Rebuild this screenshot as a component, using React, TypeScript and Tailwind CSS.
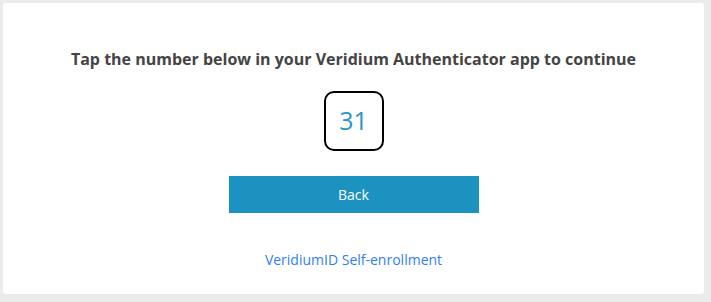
export default function App() {
  return (
    <div className="w-[711px] h-[302px] bg-[#ebebeb] pt-[3px] pl-[3px]" style={{ fontFamily: '"Open Sans", sans-serif' }}>
      <div className="w-[701px] h-[291px] bg-white rounded-[3px] flex flex-col items-center">
        <h1 className="mt-[45px] text-[16px] leading-[22px] font-bold text-[#444444]">
          Tap the number below in your Veridium Authenticator app to continue
        </h1>
        <div className="mt-[21px] w-[60px] h-[60px] border-2 border-black rounded-[10px] flex items-center justify-center text-[25px] text-[#2a95c8]">
          31
        </div>
        <button className="mt-[25px] w-[250px] h-[37px] bg-[#1b92c0] text-white text-[14px]">
          Back
        </button>
        <a className="mt-[37px] text-[14px] leading-[20px] text-[#2f80f0]">VeridiumID Self-enrollment</a>
      </div>
    </div>
  );
}
